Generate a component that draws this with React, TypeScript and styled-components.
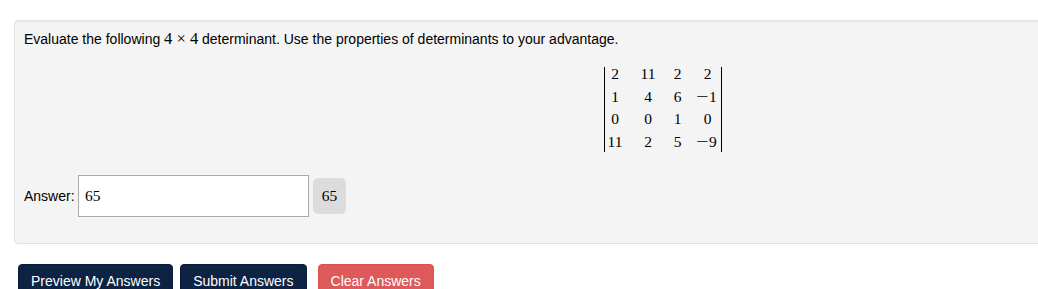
import React from "react";
import styled, { createGlobalStyle } from "styled-components";

const Global = createGlobalStyle`
  html, body { margin: 0; padding: 0; overflow: hidden; background: #fff; }
  body {
    font-family: "Liberation Sans", Arial, sans-serif;
    font-size: 14px;
    line-height: 20px;
    color: #000;
  }
  * { box-sizing: border-box; }
`;

const Page = styled.div`
  width: 1400px;
  padding: 20px 0 0 14px;
`;

const Well = styled.div`
  width: 1298px;
  padding: 8px 9px 26px;
  background: #f4f4f4;
  border: 1px solid #e2e2e2;
  border-radius: 4px;
  box-shadow: inset 0 1px 1px rgba(0, 0, 0, 0.05);
`;

const Prompt = styled.p`
  margin: 0;
`;

const MathInline = styled.span`
  font-family: "Liberation Serif", "Times New Roman", serif;
  font-size: 16.5px;
`;

const DisplayMath = styled.div`
  display: flex;
  justify-content: center;
  margin-top: 18px;
`;

const MatrixFrame = styled.div`
  height: 85px;
  border-left: 1px solid #000;
  border-right: 1px solid #000;
  padding: 0 4px 0 2px;
`;

const MatrixGrid = styled.div`
  display: grid;
  grid-template-columns: 16px 18px 9px 19px;
  grid-auto-rows: 22.67px;
  column-gap: 16px;
  justify-items: center;
  margin-top: -4px;
  font-family: "Liberation Serif", "Times New Roman", serif;
  font-size: 15.5px;
  line-height: 22.67px;
  white-space: nowrap;
`;

const Minus = styled.span`
  display: inline-block;
  transform: scaleX(1.4);
  margin-right: 2px;
`;

const AnswerRow = styled.div`
  display: flex;
  align-items: center;
  margin-top: 23px;
`;

const Label = styled.span`
  margin-right: 3.5px;
`;

const AnswerInput = styled.input`
  width: 231px;
  height: 42px;
  margin: 0;
  padding: 0 6px;
  border: 1px solid #aaa;
  background: #fff;
  font-family: "Liberation Serif", "Times New Roman", serif;
  font-size: 15.5px;
  color: #000;
  outline: none;
`;

const Preview = styled.div`
  width: 33px;
  height: 36px;
  margin-left: 4px;
  display: flex;
  align-items: center;
  justify-content: center;
  background: #dcdcdc;
  border-radius: 5px;
  font-family: "Liberation Serif", "Times New Roman", serif;
  font-size: 15.5px;
`;

const ButtonRow = styled.div`
  display: flex;
  margin: 20px 0 0 4px;
`;

const Button = styled.button<{ $danger?: boolean; $space?: number }>`
  margin: 0 0 0 ${(p) => p.$space ?? 0}px;
  padding: 6px 12px;
  font-family: "Liberation Sans", Arial, sans-serif;
  font-size: 14px;
  line-height: 20px;
  color: #fff;
  border-radius: 4px;
  border: 1px solid ${(p) => (p.$danger ? "#d9534f" : "#081c36")};
  background: ${(p) => (p.$danger ? "#de5959" : "#0c2343")};
  cursor: pointer;
`;

const rows = [
  ["2", "11", "2", "2"],
  ["1", "4", "6", "-1"],
  ["0", "0", "1", "0"],
  ["11", "2", "5", "-9"],
];

function Entry({ v }: { v: string }) {
  if (v.startsWith("-")) {
    return (
      <span>
        <Minus>{"\u2212"}</Minus>
        {v.slice(1)}
      </span>
    );
  }
  return <span>{v}</span>;
}

export default function App() {
  return (
    <>
      <Global />
      <Page>
        <Well>
          <Prompt>
            Evaluate the following <MathInline>4 × 4</MathInline> determinant. Use the properties of
            determinants to your advantage.
          </Prompt>
          <DisplayMath>
            <MatrixFrame>
              <MatrixGrid>
                {rows.flatMap((r, i) => r.map((v, j) => <Entry key={`${i}-${j}`} v={v} />))}
              </MatrixGrid>
            </MatrixFrame>
          </DisplayMath>
          <AnswerRow>
            <Label>Answer:</Label>
            <AnswerInput readOnly value="65" />
            <Preview>65</Preview>
          </AnswerRow>
        </Well>
        <ButtonRow>
          <Button>Preview My Answers</Button>
          <Button $space={7}>Submit Answers</Button>
          <Button $danger $space={11}>Clear Answers</Button>
        </ButtonRow>
      </Page>
    </>
  );
}
